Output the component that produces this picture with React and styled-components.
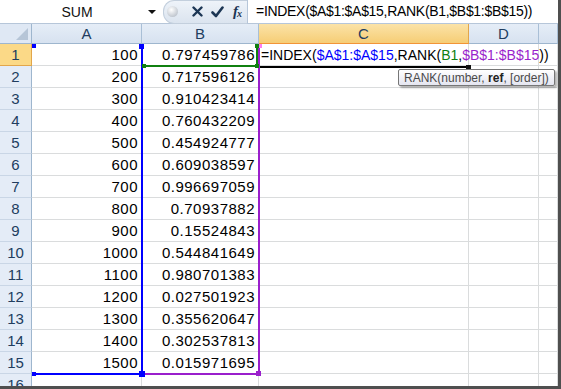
import React from 'react';
import styled, { createGlobalStyle } from 'styled-components';

const GlobalStyle = createGlobalStyle`
  html, body {
    margin: 0;
    padding: 0;
    background: #fff;
  }
  body {
    font-family: "Liberation Sans", Arial, sans-serif;
  }
`;

const COLS = [32, 110, 117, 210, 70, 19];
const A_VALUES = [100, 200, 300, 400, 500, 600, 700, 800, 900, 1000, 1100, 1200, 1300, 1400, 1500];
const B_VALUES = [
  '0.797459786', '0.717596126', '0.910423414', '0.760432209', '0.454924777',
  '0.609038597', '0.996697059', '0.70937882', '0.15524843', '0.544841649',
  '0.980701383', '0.027501923', '0.355620647', '0.302537813', '0.015971695',
];

const Frame = styled.div`
  width: 561px;
  height: 389px;
  box-sizing: border-box;
  border-right: 3px solid #4f4f4f;
  border-bottom: 3px solid #4f4f4f;
  overflow: hidden;
  display: flex;
  flex-direction: column;
  background: #fff;
`;

const FormulaBar = styled.div`
  height: 24px;
  box-sizing: border-box;
  display: flex;
  border-bottom: 1px solid #b6c6d9;
  background: #dfe7f1;
`;

const NameBox = styled.div`
  width: 163px;
  display: flex;
  align-items: center;
  background: #fff;
  font-size: 14px;
  color: #111;
`;

const NameLabel = styled.span`
  flex: 1;
  text-align: center;
  padding-left: 6px;
`;

const DropArrow = styled.span`
  width: 0;
  height: 0;
  margin-right: 7px;
  border-left: 4px solid transparent;
  border-right: 4px solid transparent;
  border-top: 4px solid #111;
`;

const ButtonStrip = styled.div`
  width: 84px;
  display: flex;
  align-items: center;
  background: #fff;
`;

const Pill = styled.div`
  flex: 1;
  height: 22px;
  display: flex;
  align-items: center;
  border-radius: 11px 0 0 11px;
  border: 1px solid #c3cfdd;
  border-right: none;
  background: linear-gradient(#eef3f9, #dbe4ef);
  padding-left: 3px;
`;

const Orb = styled.span`
  width: 11px;
  height: 11px;
  border-radius: 50%;
  background: radial-gradient(circle at 40% 35%, #ffffff, #c3c9d1 70%, #a9b1bb);
  margin-right: 9px;
`;

const IconBtn = styled.span`
  width: 20px;
  display: flex;
  justify-content: center;
  align-items: center;
  color: #1c3654;
`;

const Fx = styled.span`
  font-family: "Liberation Serif", "Times New Roman", serif;
  font-style: italic;
  font-weight: bold;
  font-size: 15px;
  color: #1c3654;
  letter-spacing: -1px;
  & sub {
    font-size: 10px;
    vertical-align: -1px;
  }
`;

const FormulaInput = styled.div`
  flex: 1;
  background: #fff;
  border-left: 1px solid #b6c6d9;
  padding-left: 8px;
  font-size: 14px;
  letter-spacing: -0.3px;
  line-height: 23px;
  color: #000;
  white-space: nowrap;
`;

const Strip = styled.div`
  height: 4px;
  background: #eef2f7;
`;

const Sheet = styled.div`
  position: relative;
  display: grid;
  grid-template-columns: ${COLS.map((c) => `${c}px`).join(' ')};
  grid-template-rows: 20px;
  grid-auto-rows: 22px;
`;

const Corner = styled.div`
  box-sizing: border-box;
  background: #dfe8f4;
  border-right: 1px solid #9eb6ce;
  border-bottom: 1px solid #9eb6ce;
  position: relative;
  &::after {
    content: '';
    position: absolute;
    right: 3px;
    bottom: 3px;
    border-left: 12px solid transparent;
    border-bottom: 12px solid #b6c5d7;
  }
`;

const ColHead = styled.div`
  box-sizing: border-box;
  display: flex;
  align-items: center;
  justify-content: center;
  font-size: 15px;
  color: #213d5f;
  background: ${(p) => (p.active ? 'linear-gradient(#fbe3a8, #f6cd75)' : 'linear-gradient(#e5edf7, #d7e2f0)')};
  border-right: 1px solid ${(p) => (p.active ? '#e2a64b' : '#a9bfd6')};
  border-bottom: 1px solid ${(p) => (p.active ? '#f29436' : '#9eb6ce')};
`;

const RowHead = styled.div`
  box-sizing: border-box;
  display: flex;
  align-items: center;
  justify-content: center;
  font-size: 15px;
  color: #213d5f;
  background: ${(p) => (p.active ? '#fbd987' : '#e4ecf7')};
  border-right: 1px solid ${(p) => (p.active ? '#e2a64b' : '#9eb6ce')};
  border-bottom: 1px solid ${(p) => (p.active ? '#e2a64b' : '#c9d6e6')};
`;

const Cell = styled.div`
  box-sizing: border-box;
  display: flex;
  align-items: center;
  justify-content: ${(p) => (p.text ? 'flex-start' : 'flex-end')};
  padding: ${(p) => (p.text ? '0 0 0 2px' : '0 3px 0 0')};
  font-size: ${(p) => (p.text ? '14px' : '15px')};
  letter-spacing: ${(p) => (p.text ? '0' : '0.5px')};
  color: #000;
  white-space: nowrap;
  border-right: 1px solid #dadcdd;
  border-bottom: 1px solid #dadcdd;
  overflow: ${(p) => (p.text ? 'visible' : 'hidden')};
  position: relative;
  z-index: ${(p) => (p.text ? 2 : 0)};
`;

const Ref = styled.span`
  color: ${(p) => p.c};
`;

const Line = styled.div`
  position: absolute;
  background: ${(p) => p.c};
  z-index: 3;
`;

const Handle = styled.div`
  position: absolute;
  width: ${(p) => p.s}px;
  height: ${(p) => p.s}px;
  background: ${(p) => p.c};
  z-index: 4;
`;

const Tooltip = styled.div`
  position: absolute;
  left: 398px;
  top: 45px;
  height: 17px;
  box-sizing: border-box;
  padding: 0 5px;
  display: flex;
  align-items: center;
  font-size: 12px;
  color: #4a4a4a;
  background: linear-gradient(#ffffff, #e4e5f0);
  border: 1px solid #767676;
  border-radius: 2px;
  box-shadow: 2px 2px 2px rgba(0, 0, 0, 0.3);
  white-space: nowrap;
  z-index: 5;
  & b {
    color: #222;
  }
`;

const BLUE = '#0000ff';
const GREEN = '#108010';
const PURPLE = '#9a1fcc';

function Formula() {
  return (
    <>
      =INDEX(<Ref c={BLUE}>$A$1:$A$15</Ref>,RANK(<Ref c={GREEN}>B1</Ref>,
      <Ref c={PURPLE}>$B$1:$B$15</Ref>))
    </>
  );
}

const XIcon = () => (
  <svg width="11" height="11" viewBox="0 0 11 11">
    <path d="M1.5 1.5 L9.5 9.5 M9.5 1.5 L1.5 9.5" stroke="currentColor" strokeWidth="2.4" strokeLinecap="round" />
  </svg>
);

const CheckIcon = () => (
  <svg width="13" height="12" viewBox="0 0 13 12">
    <path d="M1.5 6.5 L5 10 L11.5 1.5" stroke="currentColor" strokeWidth="2.6" fill="none" strokeLinejoin="round" strokeLinecap="round" />
  </svg>
);

export default function App() {
  const rows = Array.from({ length: 16 }, (_, i) => i);

  return (
    <Frame>
      <GlobalStyle />
      <FormulaBar>
        <NameBox>
          <NameLabel>SUM</NameLabel>
          <DropArrow />
        </NameBox>
        <ButtonStrip>
          <Pill>
            <Orb />
            <IconBtn><XIcon /></IconBtn>
            <IconBtn><CheckIcon /></IconBtn>
            <IconBtn><Fx>f<sub>x</sub></Fx></IconBtn>
          </Pill>
        </ButtonStrip>
        <FormulaInput>=INDEX($A$1:$A$15,RANK(B1,$B$1:$B$15))</FormulaInput>
      </FormulaBar>
      <Strip />
      <Sheet>
        <Corner />
        <ColHead>A</ColHead>
        <ColHead>B</ColHead>
        <ColHead active>C</ColHead>
        <ColHead>D</ColHead>
        <ColHead />
        {rows.map((i) => (
          <React.Fragment key={i}>
            <RowHead active={i === 0}>{i + 1}</RowHead>
            <Cell>{A_VALUES[i]}</Cell>
            <Cell>{B_VALUES[i]}</Cell>
            <Cell text={i === 0}>{i === 0 ? <Formula /> : null}</Cell>
            <Cell />
            <Cell />
          </React.Fragment>
        ))}

        {/* A1:A15 */}
        <Line c={BLUE} style={{ left: 141, top: 20, width: 2, height: 331 }} />
        <Line c={BLUE} style={{ left: 32, top: 349, width: 110, height: 2 }} />
        <Handle c={BLUE} s={4} style={{ left: 32, top: 20 }} />
        <Handle c={BLUE} s={4} style={{ left: 32, top: 348 }} />
        <Handle c={BLUE} s={5} style={{ left: 139, top: 20 }} />

        {/* B1:B15 */}
        <Line c={PURPLE} style={{ left: 258, top: 20, width: 2, height: 331 }} />
        <Line c={PURPLE} style={{ left: 142, top: 349, width: 117, height: 2 }} />
        <Handle c={PURPLE} s={5} style={{ left: 256, top: 347 }} />
        <Handle c="#ff7cf0" s={4} style={{ left: 258, top: 20 }} />

        {/* B1 */}
        <Line c={GREEN} style={{ left: 142, top: 41, width: 116, height: 2 }} />
        <Line c={GREEN} style={{ left: 256, top: 20, width: 2, height: 22 }} />
        <Handle c={GREEN} s={4} style={{ left: 142, top: 40 }} />
        <Handle c={GREEN} s={4} style={{ left: 255, top: 40 }} />
        <Handle c={GREEN} s={4} style={{ left: 255, top: 20 }} />

        <Handle c={BLUE} s={6} style={{ left: 139, top: 347 }} />

        {/* C1 edit border */}
        <Line c="#000" style={{ left: 260, top: 42, width: 208, height: 2 }} />
        <Handle c="#111" s={5} style={{ left: 466, top: 41 }} />

        <Tooltip>
          RANK(number,&nbsp;<b>ref</b>, [order])
        </Tooltip>
      </Sheet>
    </Frame>
  );
}
